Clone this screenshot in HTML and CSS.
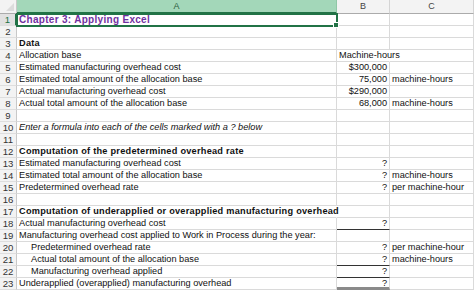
FILE: index.html
```html
<!DOCTYPE html>
<html lang="en">
<head>
    <meta charset="UTF-8">
    <title>Chapter 3: Applying Excel</title>
    <link rel="stylesheet" href="styles.css">
</head>
<body>
    <div class="sheet">
        <div class="corner"></div>
        <div class="col-head sel">A</div>
        <div class="col-head">B</div>
        <div class="col-head">C</div>

        <div class="row-head sel">1</div>
        <div class="cell title active">Chapter 3: Applying Excel</div>
        <div class="cell"></div>
        <div class="cell"></div>

        <div class="row-head">2</div>
        <div class="cell"></div>
        <div class="cell"></div>
        <div class="cell"></div>

        <div class="row-head">3</div>
        <div class="cell bold">Data</div>
        <div class="cell"></div>
        <div class="cell"></div>

        <div class="row-head">4</div>
        <div class="cell">Allocation base</div>
        <div class="cell spill">Machine-hours</div>
        <div class="cell"></div>

        <div class="row-head">5</div>
        <div class="cell">Estimated manufacturing overhead cost</div>
        <div class="cell num">$300,000</div>
        <div class="cell"></div>

        <div class="row-head">6</div>
        <div class="cell">Estimated total amount of the allocation base</div>
        <div class="cell num">75,000</div>
        <div class="cell">machine-hours</div>

        <div class="row-head">7</div>
        <div class="cell">Actual manufacturing overhead cost</div>
        <div class="cell num">$290,000</div>
        <div class="cell"></div>

        <div class="row-head">8</div>
        <div class="cell">Actual total amount of the allocation base</div>
        <div class="cell num">68,000</div>
        <div class="cell">machine-hours</div>

        <div class="row-head">9</div>
        <div class="cell"></div>
        <div class="cell"></div>
        <div class="cell"></div>

        <div class="row-head">10</div>
        <div class="cell note">Enter a formula into each of the cells marked with a ? below</div>
        <div class="cell"></div>
        <div class="cell"></div>

        <div class="row-head">11</div>
        <div class="cell"></div>
        <div class="cell"></div>
        <div class="cell"></div>

        <div class="row-head">12</div>
        <div class="cell bold">Computation of the predetermined overhead rate</div>
        <div class="cell"></div>
        <div class="cell"></div>

        <div class="row-head">13</div>
        <div class="cell">Estimated manufacturing overhead cost</div>
        <div class="cell num">?</div>
        <div class="cell"></div>

        <div class="row-head">14</div>
        <div class="cell">Estimated total amount of the allocation base</div>
        <div class="cell num">?</div>
        <div class="cell">machine-hours</div>

        <div class="row-head">15</div>
        <div class="cell">Predetermined overhead rate</div>
        <div class="cell num">?</div>
        <div class="cell">per machine-hour</div>

        <div class="row-head">16</div>
        <div class="cell"></div>
        <div class="cell"></div>
        <div class="cell"></div>

        <div class="row-head">17</div>
        <div class="cell bold spill">Computation of underapplied or overapplied manufacturing overhead</div>
        <div class="cell"></div>
        <div class="cell"></div>

        <div class="row-head">18</div>
        <div class="cell">Actual manufacturing overhead cost</div>
        <div class="cell num rule">?</div>
        <div class="cell"></div>

        <div class="row-head">19</div>
        <div class="cell">Manufacturing overhead cost applied to Work in Process during the year:</div>
        <div class="cell"></div>
        <div class="cell"></div>

        <div class="row-head">20</div>
        <div class="cell indent">Predetermined overhead rate</div>
        <div class="cell num">?</div>
        <div class="cell">per machine-hour</div>

        <div class="row-head">21</div>
        <div class="cell indent">Actual total amount of the allocation base</div>
        <div class="cell num rule">?</div>
        <div class="cell">machine-hours</div>

        <div class="row-head">22</div>
        <div class="cell indent">Manufacturing overhead applied</div>
        <div class="cell num rule">?</div>
        <div class="cell"></div>

        <div class="row-head">23</div>
        <div class="cell">Underapplied (overapplied) manufacturing overhead</div>
        <div class="cell num total">?</div>
        <div class="cell"></div>
    </div>
</body>
</html>
```

FILE: styles.css
```css
body, html {
    margin: 0;
    padding: 0;
    background-color: #ffffff;
    overflow: hidden;
}
.sheet {
    display: grid;
    grid-template-columns: 17px 320px 53px 1fr;
    grid-template-rows: 14px repeat(23, 12px);
    font-family: "Liberation Sans", Arial, sans-serif;
    font-size: 9.2px;
    color: #111;
}
.corner,
.col-head,
.row-head,
.cell {
    box-sizing: border-box;
    white-space: nowrap;
    line-height: 11px;
}
.corner {
    position: relative;
    background-color: #f3f3f3;
    border-right: 1px solid #c8c8c8;
    border-bottom: 1px solid #ababab;
}
.corner::after {
    content: "";
    position: absolute;
    right: 2px;
    bottom: 2px;
    border-left: 8px solid transparent;
    border-bottom: 8px solid #dcdcdc;
}
.col-head {
    background-color: #f3f3f3;
    border-right: 1px solid #d4d4d4;
    border-bottom: 1px solid #ababab;
    text-align: center;
    color: #444;
    font-size: 9px;
    line-height: 13px;
}
.col-head.sel {
    background-color: #a3d7b9;
    border-bottom: 2px solid #217346;
    color: #2b5d40;
    border-right-color: #8fc7a6;
}
.row-head {
    background-color: #f3f3f3;
    border-right: 1px solid #c8c8c8;
    border-bottom: 1px solid #dedede;
    text-align: center;
    color: #333;
    font-size: 9.6px;
}
.row-head.sel {
    background-color: #e1e1e1;
    color: #217346;
    border-right: 2px solid #217346;
}
.cell {
    border-right: 1px solid #dadada;
    border-bottom: 1px solid #dadada;
    padding: 0 2px;
}
.cell.spill {
    overflow: visible;
    border-right-color: transparent;
    position: relative;
    z-index: 1;
}
.num {
    text-align: right;
}
.bold {
    font-weight: bold;
    letter-spacing: 0.25px;
}
.note {
    font-style: italic;
}
.indent {
    padding-left: 14px;
}
.title {
    font-weight: bold;
    font-size: 10px;
    letter-spacing: 0.3px;
    color: #7030a0;
}
.active {
    position: relative;
    outline: 2px solid #217346;
    outline-offset: -1px;
    z-index: 2;
}
.active::after {
    content: "";
    position: absolute;
    right: -3px;
    bottom: -3px;
    width: 4px;
    height: 4px;
    background-color: #217346;
    border: 1px solid #ffffff;
}
.rule {
    border-bottom: 1px solid #333;
}
.total {
    border-bottom: 3px solid #8a8a8a;
}
```
